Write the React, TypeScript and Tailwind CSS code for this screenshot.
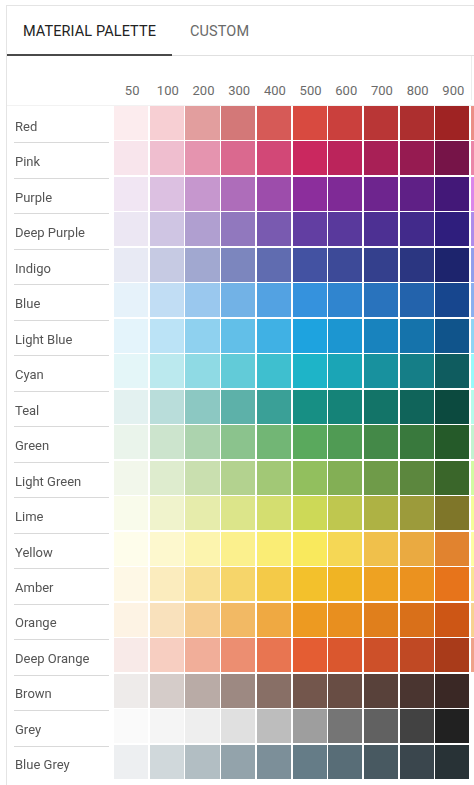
import React from "react";

const SHADES = ["50", "100", "200", "300", "400", "500", "600", "700", "800", "900", ""];

const PALETTE: [string, string[]][] = [
  ["Red", ["#FFEBEE", "#FFCDD2", "#EF9A9A", "#E57373", "#EF5350", "#F44336", "#E53935", "#D32F2F", "#C62828", "#B71C1C", "#FF8A80"]],
  ["Pink", ["#FCE4EC", "#F8BBD0", "#F48FB1", "#F06292", "#EC407A", "#E91E63", "#D81B60", "#C2185B", "#AD1457", "#880E4F", "#FF80AB"]],
  ["Purple", ["#F3E5F5", "#E1BEE7", "#CE93D8", "#BA68C8", "#AB47BC", "#9C27B0", "#8E24AA", "#7B1FA2", "#6A1B9A", "#4A148C", "#EA80FC"]],
  ["Deep Purple", ["#EDE7F6", "#D1C4E9", "#B39DDB", "#9575CD", "#7E57C2", "#673AB7", "#5E35B1", "#512DA8", "#4527A0", "#311B92", "#B388FF"]],
  ["Indigo", ["#E8EAF6", "#C5CAE9", "#9FA8DA", "#7986CB", "#5C6BC0", "#3F51B5", "#3949AB", "#303F9F", "#283593", "#1A237E", "#8C9EFF"]],
  ["Blue", ["#E3F2FD", "#BBDEFB", "#90CAF9", "#64B5F6", "#42A5F5", "#2196F3", "#1E88E5", "#1976D2", "#1565C0", "#0D47A1", "#82B1FF"]],
  ["Light Blue", ["#E1F5FE", "#B3E5FC", "#81D4FA", "#4FC3F7", "#29B6F6", "#03A9F4", "#039BE5", "#0288D1", "#0277BD", "#01579B", "#80D8FF"]],
  ["Cyan", ["#E0F7FA", "#B2EBF2", "#80DEEA", "#4DD0E1", "#26C6DA", "#00BCD4", "#00ACC1", "#0097A7", "#00838F", "#006064", "#84FFFF"]],
  ["Teal", ["#E0F2F1", "#B2DFDB", "#80CBC4", "#4DB6AC", "#26A69A", "#009688", "#00897B", "#00796B", "#00695C", "#004D40", "#A7FFEB"]],
  ["Green", ["#E8F5E9", "#C8E6C9", "#A5D6A7", "#81C784", "#66BB6A", "#4CAF50", "#43A047", "#388E3C", "#2E7D32", "#1B5E20", "#B9F6CA"]],
  ["Light Green", ["#F1F8E9", "#DCEDC8", "#C5E1A5", "#AED581", "#9CCC65", "#8BC34A", "#7CB342", "#689F38", "#558B2F", "#33691E", "#CCFF90"]],
  ["Lime", ["#F9FBE7", "#F0F4C3", "#E6EE9C", "#DCE775", "#D4E157", "#CDDC39", "#C0CA33", "#AFB42B", "#9E9D24", "#827717", "#F4FF81"]],
  ["Yellow", ["#FFFDE7", "#FFF9C4", "#FFF59D", "#FFF176", "#FFEE58", "#FFEB3B", "#FDD835", "#FBC02D", "#F9A825", "#F57F17", "#FFFF8D"]],
  ["Amber", ["#FFF8E1", "#FFECB3", "#FFE082", "#FFD54F", "#FFCA28", "#FFC107", "#FFB300", "#FFA000", "#FF8F00", "#FF6F00", "#FFE57F"]],
  ["Orange", ["#FFF3E0", "#FFE0B2", "#FFCC80", "#FFB74D", "#FFA726", "#FF9800", "#FB8C00", "#F57C00", "#EF6C00", "#E65100", "#FFD180"]],
  ["Deep Orange", ["#FBE9E7", "#FFCCBC", "#FFAB91", "#FF8A65", "#FF7043", "#FF5722", "#F4511E", "#E64A19", "#D84315", "#BF360C", "#FF9E80"]],
  ["Brown", ["#EFEBE9", "#D7CCC8", "#BCAAA4", "#A1887F", "#8D6E63", "#795548", "#6D4C41", "#5D4037", "#4E342E", "#3E2723", "#ffffff"]],
  ["Grey", ["#FAFAFA", "#F5F5F5", "#EEEEEE", "#E0E0E0", "#BDBDBD", "#9E9E9E", "#757575", "#616161", "#424242", "#212121", "#ffffff"]],
  ["Blue Grey", ["#ECEFF1", "#CFD8DC", "#B0BEC5", "#90A4AE", "#78909C", "#607D8B", "#546E7A", "#455A64", "#37474F", "#263238", "#ffffff"]],
];

export default function App() {
  return (
    <div className="w-[474px] h-[785px] overflow-hidden bg-white pt-[5px] pl-[6px] font-['Roboto',sans-serif]">
      <div className="h-full border-t border-l border-[#e4e4e4] w-[600px]">
        {/* Tabs */}
        <div className="flex h-[50px] border-b border-[#e0e0e0]">
          <div className="w-[165px] flex-none flex items-center justify-center border-b-2 border-[#4a4a4a] -mb-px pt-[3px] text-[14.5px] text-[#222222] tracking-[0.1px]">
            MATERIAL PALETTE
          </div>
          <div className="flex-none flex items-center pl-[18px] pt-[3px] text-[14.5px] text-[#6a6a6a] tracking-[0.1px]">
            CUSTOM
          </div>
        </div>

        {/* Header numbers */}
        <div className="flex h-[50px] items-end pb-[5px] gap-x-[1.6px] border-b border-[#f2f2f2]">
          <div className="w-[105.5px] flex-none" />
          {SHADES.map((s, i) => (
            <div
              key={i}
              className={
                "w-[34.1px] flex-none text-center text-[13px] text-[#6b6b6b] pl-[2px] " +
                (i === 10 ? "border-l border-[#ececec] h-full" : "")
              }
            >
              {s}
            </div>
          ))}
        </div>

        {/* Rows */}
        <div className="flex flex-col gap-y-[1.6px] saturate-[.8]">
          {PALETTE.map(([name, colors], r) => (
            <div key={name} className="flex gap-x-[1.6px] h-[33.9px]">
              <div className="w-[105.5px] flex-none relative">
                {r > 0 && (
                  <div className="absolute left-[7px] right-[4px] top-[1px] h-px bg-[#d9d9d9]" />
                )}
                <div className="h-full flex items-center pl-[8px] pt-[7px] text-[13px] text-[#555555]">
                  {name}
                </div>
              </div>
              {colors.map((c, i) => (
                <div
                  key={i}
                  className="w-[34.1px] h-full flex-none"
                  style={{ backgroundColor: c }}
                />
              ))}
            </div>
          ))}
        </div>
      </div>
    </div>
  );
}
